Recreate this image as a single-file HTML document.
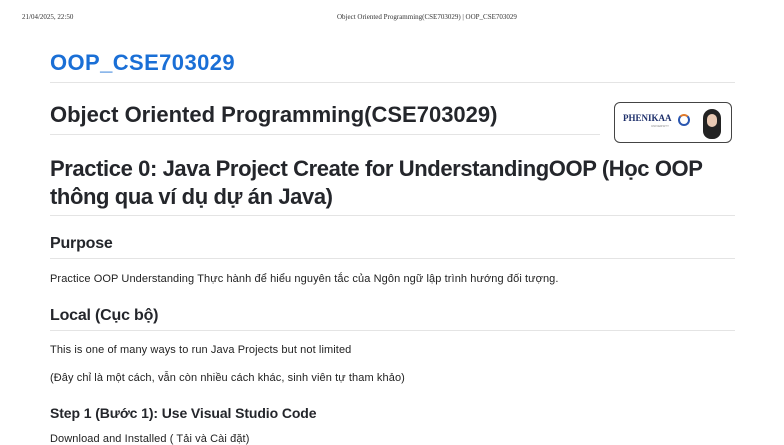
<!DOCTYPE html>
<html><head><meta charset="utf-8"><style>
body{margin:0;width:784px;height:441px;overflow:hidden;background:#fff;font-family:"Liberation Sans","Noto Sans CJK SC",sans-serif;color:#222;position:relative}
.a{position:absolute;white-space:nowrap}
.hr{position:absolute;height:1px;background:#e4e4e4}
.h{font-weight:bold;color:#24262b;letter-spacing:-0.4px}
.p{letter-spacing:0.1px}
</style></head><body>
<div class="a" style="left:22px;top:13px;font-size:7px;font-family:'Liberation Serif',serif;color:#333">21/04/2025, 22:50</div>
<div class="a" style="left:337px;top:13px;font-size:7px;font-family:'Liberation Serif',serif;color:#333">Object Oriented Programming(CSE703029) | OOP_CSE703029</div>
<div class="a h" style="left:50px;top:50px;font-size:22px;color:#1a6fd6;letter-spacing:0.4px">OOP_CSE703029</div>
<div class="hr" style="left:50px;top:82px;width:685px"></div>
<div class="a h" style="left:50px;top:102px;font-size:22px;letter-spacing:0">Object Oriented Programming(CSE703029)</div>
<div class="hr" style="left:50px;top:134px;width:550px"></div>
<div style="position:absolute;left:614px;top:102px;width:118px;height:41px;border:1px solid #444;border-radius:6px;box-sizing:border-box">
<div class="a" style="left:8px;top:10px;font-size:9px;font-weight:bold;color:#1d2f6b;font-family:'Liberation Serif',serif">PHENIKAA</div>
<div class="a" style="left:63px;top:11px;width:8px;height:8px;border:2px solid #2a56b0;border-top-color:#e07a2a;border-radius:50%"></div>
<div class="a" style="left:36px;top:21px;font-size:3px;color:#888">UNIVERSITY</div>
<div class="a" style="left:88px;top:6px;width:18px;height:30px;background:#222;border-radius:9px 9px 8px 8px"></div>
<div class="a" style="left:92px;top:11px;width:10px;height:13px;background:#e9c9b3;border-radius:5px"></div>
</div>
<div class="a h" style="left:50px;top:155px;font-size:22px;line-height:28px">Practice 0: Java Project Create for UnderstandingOOP (Học OOP<br>thông qua ví dụ dự án Java)</div>
<div class="hr" style="left:50px;top:215px;width:685px"></div>
<div class="a h" style="left:50px;top:235px;font-size:16px;letter-spacing:-0.2px">Purpose</div>
<div class="hr" style="left:50px;top:258px;width:685px"></div>
<div class="a p" style="left:50px;top:273px;font-size:11px">Practice OOP Understanding Thực hành để hiểu nguyên tắc của Ngôn ngữ lập trình hướng đối tượng.</div>
<div class="a h" style="left:50px;top:307px;font-size:16px;letter-spacing:-0.2px">Local (Cục bộ)</div>
<div class="hr" style="left:50px;top:330px;width:685px"></div>
<div class="a p" style="left:50px;top:344px;font-size:11px">This is one of many ways to run Java Projects but not limited</div>
<div class="a p" style="left:50px;top:372px;font-size:11px">(Đây chỉ là một cách, vẫn còn nhiều cách khác, sinh viên tự tham khảo)</div>
<div class="a h" style="left:50px;top:405px;font-size:14px;letter-spacing:-0.1px">Step 1 (Bước 1): Use Visual Studio Code</div>
<div class="a p" style="left:50px;top:433px;font-size:11px">Download and Installed ( Tải và Cài đặt)</div>
</body></html>
